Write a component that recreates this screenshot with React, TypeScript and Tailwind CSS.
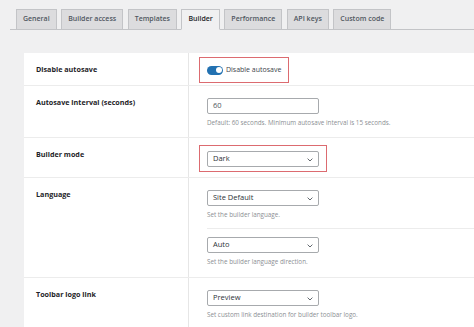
import React from "react";

const font = { fontFamily: '"Open Sans", "Noto Sans", sans-serif' };

function Chevron() {
  return (
    <svg width="6" height="4" viewBox="0 0 6 4" className="absolute right-[5px] top-[6px]">
      <path d="M0.6 0.6 L3 3 L5.4 0.6" fill="none" stroke="#50575e" strokeWidth="0.9" />
    </svg>
  );
}

function Select({ value }: { value: string }) {
  return (
    <div className="relative w-[112px] h-[16px] border border-[#a7aaad] rounded-[2px] bg-white flex items-center pl-[5px] text-[7.5px] text-[#2c3338]">
      {value}
      <Chevron />
    </div>
  );
}

function Help({ children }: { children: React.ReactNode }) {
  return <div className="mt-[4px] text-[6.3px] leading-[10px] text-[#8c8f94]">{children}</div>;
}

function Row({ label, children, h, last }: { label: string; children: React.ReactNode; h: string; last?: boolean }) {
  return (
    <div className={`flex ${h} ${last ? "" : "border-b border-[#ececec]"}`}>
      <div className="w-[165px] shrink-0 border-r border-[#e6e6e6] pl-[12px] pt-[11px] text-[7.2px] leading-[10px] font-bold text-[#1d2327]">
        {label}
      </div>
      <div className="flex-1">{children}</div>
    </div>
  );
}

export default function App() {
  const tabs = ["General", "Builder access", "Templates", "Builder", "Performance", "API keys", "Custom code"];
  return (
    <div className="w-[474px] h-[327px] bg-[#f0f0f1] overflow-hidden" style={font}>
      <div className="ml-[10px] pt-[9px] pl-[6px] flex gap-[4.5px] border-b border-[#c3c4c7] h-[30px]">
        {tabs.map((t) => (
          <div
            key={t}
            className={`h-[21px] px-[6px] flex items-center text-[7px] font-semibold border border-[#c3c4c7] ${
              t === "Builder" ? "bg-[#f0f0f1] text-[#1d2327] border-b-[#f0f0f1]" : "bg-[#dcdcde] text-[#50575e]"
            }`}
          >
            {t}
          </div>
        ))}
      </div>
      <div className="ml-[24px] mt-[23px] bg-white">
        <Row label="Disable autosave" h="h-[33px]">
          <div className="pl-[10px] pt-[4px]">
            <div className="w-[90px] h-[26px] border border-[#dc6b70] flex items-center pl-[7px] gap-[3px]">
              <div className="w-[16px] h-[9px] rounded-full bg-[#2271b1] flex items-center justify-end pr-[1.5px]">
                <div className="w-[6px] h-[6px] rounded-full bg-white" />
              </div>
              <span className="text-[7px] text-[#3c434a]">Disable autosave</span>
            </div>
          </div>
        </Row>
        <Row label="Autosave interval (seconds)" h="h-[52px]">
          <div className="pl-[18px] pt-[12px]">
            <div className="w-[112px] h-[16px] border border-[#a7aaad] rounded-[2px] flex items-center pl-[5px] text-[7.5px] text-[#50575e]">
              60
            </div>
            <Help>Default: 60 seconds. Minimum autosave interval is 15 seconds.</Help>
          </div>
        </Row>
        <Row label="Builder mode" h="h-[40px]">
          <div className="pl-[10px] pt-[7px]">
            <div className="w-[128px] h-[27px] border border-[#dc6b70] pl-[7px] pt-[5px]">
              <Select value="Dark" />
            </div>
          </div>
        </Row>
        <Row label="Language" h="h-[100px]">
          <div className="pl-[18px] pt-[12px]">
            <Select value="Site Default" />
            <Help>Set the builder language.</Help>
            <div className="mt-[8px] border-t border-[#ececec] pt-[8px]">
              <Select value="Auto" />
              <Help>Set the builder language direction.</Help>
            </div>
          </div>
        </Row>
        <Row label="Toolbar logo link" h="h-[60px]" last>
          <div className="pl-[18px] pt-[12px]">
            <Select value="Preview" />
            <Help>Set custom link destination for builder toolbar logo.</Help>
          </div>
        </Row>
      </div>
    </div>
  );
}
